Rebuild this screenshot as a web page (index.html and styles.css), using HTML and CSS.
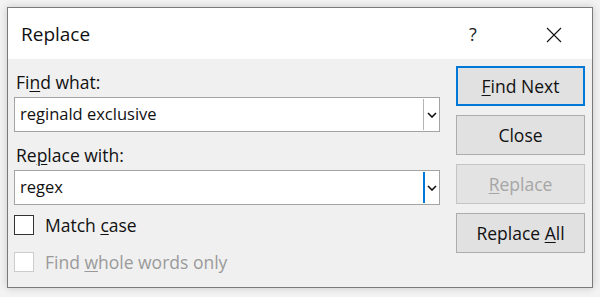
FILE: index.html
```html
<!DOCTYPE html>
<html lang="en">
<head>
  <meta charset="UTF-8" />
  <title>Replace</title>
  <link rel="stylesheet" href="styles.css">
</head>
<body>

  <!-- Replace dialog -->
  <div class="window">
    <div class="titlebar">
      <span class="title">Replace</span>
      <span class="help">?</span>
      <span class="close">
        <svg width="16" height="16" viewBox="0 0 16 16">
          <path d="M1 1 L15 15 M15 1 L1 15" stroke="#111" stroke-width="1.1" fill="none"/>
        </svg>
      </span>
    </div>

    <div class="content">
      <div class="fields">
        <div class="label">Fi<u>n</u>d what:</div>
        <div class="combo">
          <div class="combo-text">reginald exclusive</div>
          <div class="combo-arrow">
            <svg width="10" height="6" viewBox="0 0 10 6"><path d="M1 1 L5 5 L9 1" stroke="#111" stroke-width="1.6" fill="none"/></svg>
          </div>
        </div>

        <div class="label">Re<u>p</u>lace with:</div>
        <div class="combo">
          <div class="combo-text">regex</div>
          <div class="combo-arrow focus">
            <svg width="10" height="6" viewBox="0 0 10 6"><path d="M1 1 L5 5 L9 1" stroke="#111" stroke-width="1.6" fill="none"/></svg>
          </div>
        </div>

        <div class="options">
          <label class="check"><span class="box"></span><span>Match <u>c</u>ase</span></label>
          <label class="check disabled"><span class="box"></span><span>Find <u>w</u>hole words only</span></label>
        </div>
      </div>

      <div class="buttons">
        <button class="btn default"><u>F</u>ind Next</button>
        <button class="btn">Close</button>
        <button class="btn disabled"><u>R</u>eplace</button>
        <button class="btn">Replace <u>A</u>ll</button>
      </div>
    </div>
  </div>

</body>
</html>
```

FILE: styles.css
```css
* {
  box-sizing: border-box;
}

body {
  margin: 0;
  background: #f3f3f3;
  font-family: 'Open Sans', 'Noto Sans', sans-serif;
  color: #111;
  height: 297px;
  overflow: hidden;
}

u {
  text-underline-offset: 2px;
  text-decoration-thickness: 1px;
}

.window {
  margin: 7px 0 0 7px;
  width: 586px;
  height: 281px;
  border: 1px solid #7a7a7a;
  background: #f0f0f0;
  box-shadow: 0 0 8px rgba(0, 0, 0, 0.18);
  display: flex;
  flex-direction: column;
}

.titlebar {
  height: 51px;
  background: #fff;
  display: flex;
  align-items: center;
  padding-left: 13px;
}

.title {
  font-size: 19px;
  flex: 1;
}

.help {
  font-size: 18px;
  width: 77px;
  color: #222;
}

.close {
  width: 46px;
  display: flex;
  padding-top: 2px;
}

.content {
  flex: 1;
  display: flex;
  padding: 7px 7px 0 6px;
}

.fields {
  width: 426px;
  display: flex;
  flex-direction: column;
}

.label {
  font-size: 17.5px;
  height: 31px;
  line-height: 20px;
  padding: 6px 0 0 2px;
}

.combo {
  height: 35px;
  border: 1px solid #a3a3a3;
  background: #fff;
  display: flex;
  margin-bottom: 7px;
}

.combo-text {
  flex: 1;
  font-size: 16.5px;
  padding-left: 5px;
  line-height: 32px;
}

.combo-arrow {
  width: 16px;
  border-left: 1px solid #b4b4b4;
  display: flex;
  align-items: center;
  justify-content: center;
  margin: 1px 0;
}

.combo-arrow.focus {
  border-left: 2px solid #0078d7;
}

.options {
  display: flex;
  flex-direction: column;
  gap: 18px;
  padding-top: 3px;
}

.check {
  display: flex;
  align-items: center;
  font-size: 17.5px;
  height: 19px;
}

.box {
  width: 20px;
  height: 20px;
  border: 1px solid #333;
  background: #fff;
  margin-right: 11px;
}

.check.disabled {
  color: #9a9a9a;
}

.check.disabled .box {
  border-color: #cccccc;
}

.buttons {
  margin-left: 16px;
  width: 129px;
  display: flex;
  flex-direction: column;
  gap: 9px;
}

.btn {
  height: 40px;
  background: #e1e1e1;
  border: 1px solid #adadad;
  font-family: inherit;
  font-size: 17.5px;
  color: #111;
  padding: 0;
}

.btn.default {
  border: 2px solid #0078d7;
}

.btn.disabled {
  color: #a6a6a6;
  border-color: #c4c4c4;
  background: #e3e3e3;
}
```
